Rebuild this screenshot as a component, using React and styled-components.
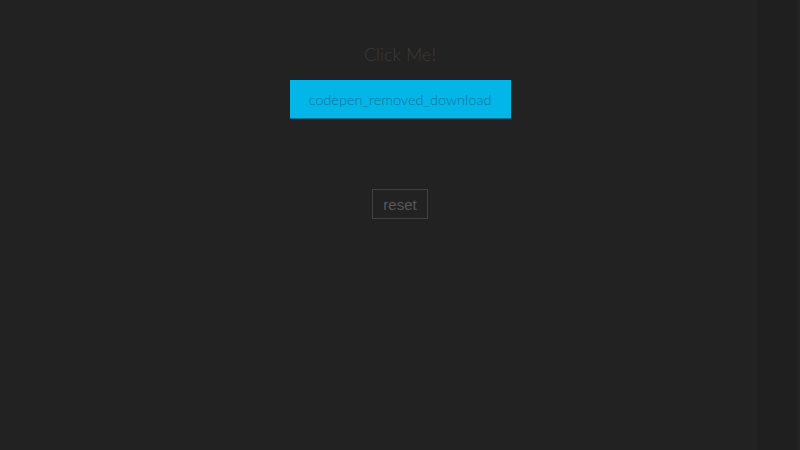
import React from 'react';
import styled, { createGlobalStyle } from 'styled-components';

const Global = createGlobalStyle`
    html, body {
        margin: 0;
        height: 100%;
        background: #222222;
    }
    #root {
        height: 100%;
    }
`

// the right edge of the frame is a touch darker, as in the original pen
const Page = styled.div`
    display: flex;
    flex-direction: column;
    align-items: center;
    height: 450px;
    padding-top: 41px;
    box-sizing: border-box;
    background: linear-gradient(
        to right,
        #222222 0,
        #222222 757px,
        #1f1f1f 757px,
        #1f1f1f 795px,
        #252525 800px
    );
`

const Title = styled.h1`
    margin: 0;
    font-family: "Lato", "Open Sans", sans-serif;
    font-weight: 300;
    font-size: 18px;
    line-height: 26px;
    color: #3b3b3b;
`

const Download = styled.button`
    margin-top: 13px;
    width: 221px;
    height: 38px;
    border: none;
    background: #04b5e8;
    box-shadow: 0 1px 0 #0b6e8a;
    font-family: "Lato", "Open Sans", sans-serif;
    font-weight: 300;
    font-size: 14.5px;
    color: #08749a;
    cursor: pointer;
`

const Reset = styled.button`
    margin-top: 71px;
    width: 56px;
    height: 30px;
    background: transparent;
    border: 1px solid #424242;
    font-family: "Liberation Sans", Arial, sans-serif;
    font-size: 15px;
    color: #585858;
    cursor: pointer;
`

const App = () => {
    return (
        <Page>
            <Global />
            <Title>Click Me!</Title>
            <Download>codepen_removed_download</Download>
            <Reset>reset</Reset>
        </Page>
    )
}

export default App;
